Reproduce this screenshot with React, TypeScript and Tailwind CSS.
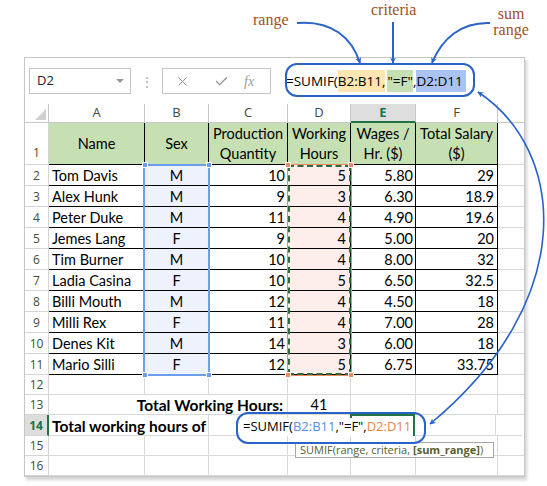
import React from 'react';
import { X, Check } from 'lucide-react';

const rows: [string, string, number, number, string, number][] = [
  ['Tom Davis', 'M', 10, 5, '5.80', 29],
  ['Alex Hunk', 'M', 9, 3, '6.30', 18.9],
  ['Peter Duke', 'M', 11, 4, '4.90', 19.6],
  ['Jemes Lang', 'F', 9, 4, '5.00', 20],
  ['Tim Burner', 'M', 10, 4, '8.00', 32],
  ['Ladia Casina', 'F', 10, 5, '6.50', 32.5],
  ['Billi Mouth', 'M', 12, 4, '4.50', 18],
  ['Milli Rex', 'F', 11, 4, '7.00', 28],
  ['Denes Kit', 'M', 14, 3, '6.00', 18],
  ['Mario Silli', 'F', 12, 5, '6.75', 33.75],
];

function RowNum({ n, active = false, tall = false }: { n: number; active?: boolean; tall?: boolean }) {
  return (
    <div
      className={`w-[24px] shrink-0 flex justify-center items-end pb-[1px] text-[12px] leading-[16px] font-['Open_Sans',sans-serif] ${
        active
          ? 'bg-[#dedede] border-r-2 border-r-[#217346] text-[#217346] font-bold border-b border-b-[#d4d4d4]'
          : 'border-r border-b border-[#d4d4d4] text-[#3f4d3a]'
      } ${tall ? 'pb-[3px]' : ''}`}
    >
      {n}
    </div>
  );
}

const grid = 'border-r border-b border-[#d9d9d9]';
const blk = 'border-r border-b border-black';

function EmptyRow({ n }: { n: number }) {
  return (
    <div className="flex h-[20px]">
      <RowNum n={n} />
      <div className={`w-[96px] ${grid}`} />
      <div className={`w-[64px] ${grid}`} />
      <div className={`w-[79px] ${grid}`} />
      <div className={`w-[63px] ${grid}`} />
      <div className={`w-[65px] ${grid}`} />
      <div className={`w-[82px] ${grid}`} />
      <div className="w-[26px] border-b border-[#d9d9d9]" />
    </div>
  );
}

export default function App() {
  return (
    <div className="relative w-[547px] h-[486px] bg-white overflow-hidden font-['Lato',sans-serif] text-[14.5px] text-black">
      {/* callout labels */}
      <span className="absolute left-[253px] top-[11px] font-['Liberation_Serif',serif] text-[16px] leading-[18px] text-[#a0501e]">range</span>
      <span className="absolute left-[371px] top-[1px] font-['Liberation_Serif',serif] text-[16px] leading-[18px] text-[#a0501e]">criteria</span>
      <div className="absolute left-[493px] top-[6px] w-[36px] flex flex-col items-center font-['Liberation_Serif',serif] text-[16px] leading-[16px] text-[#a0501e]">
        <span>sum</span>
        <span>range</span>
      </div>

      {/* excel window */}
      <div className="relative mt-[57px] ml-[24px] w-[501px] border border-[#c6c6c6] bg-white shadow-[2px_3px_3px_rgba(0,0,0,0.18)]">
        {/* formula bar */}
        <div className="flex h-[46px] pt-[10px] pl-[4px]">
          <div className="w-[102px] h-[26px] border border-[#c6c6c6] flex items-center justify-between pl-[7px] pr-[6px] font-['Open_Sans',sans-serif] text-[13px]">
            <span className="text-[#222]">D2</span>
            <span className="w-0 h-0 border-l-[4px] border-r-[4px] border-t-[4px] border-l-transparent border-r-transparent border-t-[#9a9a9a]" />
          </div>
          <div className="w-[31px] h-[26px] flex items-center justify-center text-[#b0b0b0] text-[14px]">⋮</div>
          <div className="w-[109px] h-[26px] border border-[#c6c6c6] flex items-center pl-[12px]">
            <X size={15} strokeWidth={1.4} className="text-[#8a8a8a]" />
            <Check size={15} strokeWidth={2} className="ml-[24px] text-[#8a8f88]" />
            <span className="ml-[15px] font-['Liberation_Serif',serif] italic text-[14px] text-[#9a9a9a]">fx</span>
          </div>
          <div className="flex-1 h-[26px] ml-[4px] flex items-center pl-[11px] font-['Open_Sans',sans-serif] text-[13.5px] text-black whitespace-nowrap">
            <span>=SUMIF(</span>
            <span className="bg-[#fde6b0] h-[22px] flex items-center">B2:B11,</span>
            <span className="bg-[#c6e0b4] h-[22px] flex items-center ml-[2px]">"=F"</span>
            <span>,</span>
            <span className="bg-[#abc3f2] h-[22px] flex items-center pr-[3px]">D2:D11</span>
          </div>
        </div>

        {/* column headers */}
        <div className="flex h-[19px] font-['Open_Sans',sans-serif] text-[13px] text-[#3f4d3a]">
          <div className="w-[24px] border-r border-b border-[#c8c8c8] flex items-end justify-end p-[2px]">
            <span className="w-0 h-0 border-l-[11px] border-l-transparent border-b-[11px] border-b-[#d0d0d0]" />
          </div>
          {['A', 'B', 'C', 'D'].map((c, i) => (
            <div
              key={c}
              className={`${['w-[96px]', 'w-[64px]', 'w-[79px]', 'w-[63px]'][i]} border-r border-b border-[#c8c8c8] flex items-center justify-center`}
            >
              {c}
            </div>
          ))}
          <div className="w-[65px] border-r border-[#c8c8c8] border-b-2 border-b-[#217346] bg-[#dedede] flex items-center justify-center font-bold text-[#217346]">
            E
          </div>
          <div className="w-[82px] border-r border-b border-[#c8c8c8] flex items-center justify-center">F</div>
          <div className="w-[26px] border-b border-[#c8c8c8]" />
        </div>

        {/* row 1: headers */}
        <div className="flex h-[42px]">
          <RowNum n={1} tall />
          {[
            ['w-[96px]', 'Name'],
            ['w-[64px]', 'Sex'],
            ['w-[79px]', 'Production Quantity'],
            ['w-[63px]', 'Working Hours'],
            ['w-[65px]', 'Wages / Hr. ($)'],
            ['w-[82px]', 'Total Salary ($)'],
          ].map(([w, t]) => (
            <div key={t} className={`${w} ${blk} bg-[#c6e0b4] flex items-center justify-center text-center leading-[20px] px-[1px]`}>
              {t}
            </div>
          ))}
          <div className="w-[26px] border-b border-[#d9d9d9]" />
        </div>

        {/* data rows */}
        {rows.map(([name, sex, qty, hrs, wage, sal], i) => (
          <div key={name} className="flex h-[21px] leading-[18px]">
            <RowNum n={i + 2} />
            <div className={`w-[96px] ${blk} flex items-end pl-[3px] whitespace-nowrap`}>{name}</div>
            <div className={`w-[64px] ${blk} bg-[#edf2fc] flex items-end justify-center`}>{sex}</div>
            <div className={`w-[79px] ${blk} flex items-end justify-end pr-[2px]`}>{qty}</div>
            <div className={`w-[63px] ${blk} bg-[#fdeeec] flex items-end justify-end pr-[4px]`}>{hrs}</div>
            <div className={`w-[65px] ${blk} flex items-end justify-end pr-[2px]`}>{wage}</div>
            <div className={`w-[82px] ${blk} flex items-end justify-end pr-[3px]`}>{sal}</div>
            <div className="w-[26px] border-b border-[#d9d9d9]" />
          </div>
        ))}

        <EmptyRow n={12} />

        {/* row 13 */}
        <div className="flex h-[20px] leading-[18px]">
          <RowNum n={13} />
          <div className={`w-[239px] ${grid} flex items-end justify-end pr-[4px] font-bold text-[15.5px] whitespace-nowrap`}>Total Working Hours:</div>
          <div className={`w-[63px] ${grid} flex items-end justify-center`}>41</div>
          <div className={`w-[65px] ${grid}`} />
          <div className={`w-[82px] ${grid}`} />
          <div className="w-[26px] border-b border-[#d9d9d9]" />
        </div>

        {/* row 14 */}
        <div className="flex h-[21px] leading-[18px]">
          <RowNum n={14} active />
          <div className={`w-[160px] ${grid} flex items-end pl-[3px] font-bold text-[15.5px] whitespace-nowrap`}>Total working hours of</div>
          <div className={`w-[79px] ${grid}`} />
          <div className={`w-[63px] ${grid}`} />
          <div className="w-[65px] border-2 border-[#217346] -ml-[1px] -mt-[1px] h-[22px]" />
          <div className={`w-[81px] ${grid}`} />
          <div className="w-[26px] border-b border-[#d9d9d9]" />
        </div>

        <EmptyRow n={15} />
        <EmptyRow n={16} />

        {/* selection B2:B11 */}
        <div className="absolute left-[118px] top-[106px] w-[67px] h-[212px] border-2 border-[#6d9eeb]" />
        {[
          'left-[117px] top-[104px]',
          'left-[181px] top-[104px]',
          'left-[117px] top-[314px]',
          'left-[181px] top-[314px]',
        ].map((p) => (
          <div key={p} className={`absolute ${p} w-[6px] h-[6px] bg-[#6d9eeb] border border-white`} />
        ))}

        {/* copy range D2:D11 */}
        <div className="absolute left-[262px] top-[106px] w-[65px] h-[212px] border border-[#ec8b5e]">
          <div className="w-full h-full border-2 border-dashed border-[#2e6b3c]" />
        </div>
        {[
          'left-[260px] top-[104px]',
          'left-[323px] top-[104px]',
          'left-[260px] top-[314px]',
          'left-[323px] top-[314px]',
        ].map((p) => (
          <div key={p} className={`absolute ${p} w-[6px] h-[6px] bg-[#ec8b5e] border border-white`} />
        ))}

        {/* in-cell edit text */}
        <div className="absolute left-[215px] top-[360px] w-[173px] h-[18px] bg-white pl-[3px] flex items-center font-['Open_Sans',sans-serif] text-[13px] whitespace-nowrap">
          <span>=SUMIF(</span>
          <span className="text-[#5b8fe0]">B2:B11</span>
          <span>,"=F",</span>
          <span className="text-[#e8864d]">D2:D11</span>
        </div>

        {/* tooltip */}
        <div className="absolute left-[270px] top-[384px] w-[199px] h-[16px] bg-white border border-[#a8a8a8] flex items-center pl-[4px] font-['Open_Sans',sans-serif] text-[11px] leading-[14px] text-[#55602f] whitespace-nowrap">
          SUMIF(range, criteria, <span className="font-bold ml-[3px]">[sum_range]</span>)
        </div>
      </div>

      {/* arrows and callout outlines */}
      <svg className="absolute inset-0 pointer-events-none" width="547" height="486" viewBox="0 0 547 486">
        <defs>
          <marker id="ah" viewBox="0 0 10 10" refX="9" refY="5" markerWidth="6" markerHeight="7" orient="auto-start-reverse" markerUnits="userSpaceOnUse">
            <path d="M0,0 L10,5 L0,10 L3,5 z" fill="#2a63c8" />
          </marker>
        </defs>
        <g fill="none" stroke="#2a63c8" strokeWidth="2">
          <rect x="286" y="64" width="188" height="32" rx="11" />
          <rect x="237" y="413" width="188" height="30" rx="11" />
          <path d="M297,23 C332,20 352,38 360,63" markerEnd="url(#ah)" />
          <path d="M393,22 L393,63" markerEnd="url(#ah)" />
          <path d="M490,23 C462,22 442,38 432,63" markerEnd="url(#ah)" />
          <path d="M478,92 C566,150 580,300 430,424" markerStart="url(#ah)" markerEnd="url(#ah)" strokeWidth="1.6" />
        </g>
      </svg>
    </div>
  );
}
